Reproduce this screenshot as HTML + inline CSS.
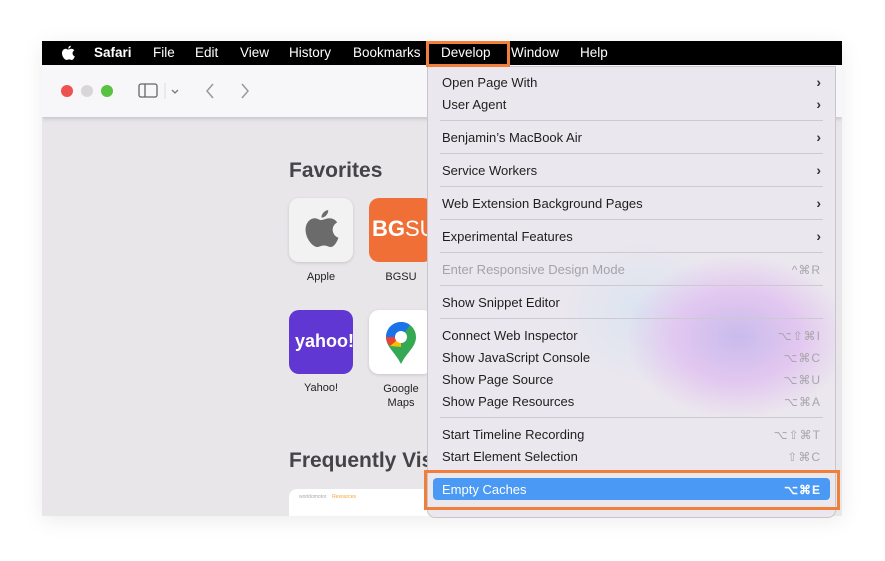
<!DOCTYPE html>
<html><head><meta charset="utf-8"><style>
*{margin:0;padding:0;box-sizing:border-box}
body{width:885px;height:561px;background:#fff;position:relative;overflow:hidden;font-family:"Liberation Sans",sans-serif}
.win{position:absolute;left:42px;top:41px;width:800px;height:475px;background:#e9e6ea;overflow:hidden;box-shadow:0 4px 20px rgba(0,0,0,.08)}
.mb{position:absolute;left:0;top:0;width:800px;height:24px;background:#000;color:#fff;font-size:13.5px}
.mb span{position:absolute;top:4px}
.tb{position:absolute;left:0;top:24px;width:800px;height:52px;background:#f7f6f8;box-shadow:0 2px 4px rgba(0,0,0,.15)}
.dot{position:absolute;top:20px;width:12px;height:12px;border-radius:50%}
.t{position:absolute;font-size:11px;color:#222;text-align:center;width:70px}
.ic{position:absolute;width:64px;height:64px;border-radius:10px}
.menu{position:absolute;left:427px;top:66px;width:409px;height:452px;border-radius:0 0 8px 8px;background:#ebe7ee;border:1px solid #c9c5cc;overflow:hidden}
.it{position:absolute;left:14px;font-size:13px;color:#1e1e1e;white-space:nowrap}
.sc{position:absolute;right:14px;font-size:12px;color:#a9a5ac;letter-spacing:1px}
.ar{position:absolute;right:14px;font-size:14px;color:#333;font-weight:bold}
.sep{position:absolute;left:12px;right:12px;height:1px;background:#cdc9d0}
</style></head><body>
<div class="win">
 <div class="mb">
  <svg style="position:absolute;left:19px;top:4px" width="14" height="16" viewBox="0 0 14 16"><path d="M7 4.5C8 4.5 9 3.8 10.3 3.8c1.2 0 2.3.6 3 1.6-2.6 1.4-2.2 5 .5 6-.5 1.4-1.6 3.6-3 3.6-1 0-1.3-.6-2.6-.6-1.3 0-1.7.6-2.7.6C3.8 15 1 11.8 1 8.3 1 5.6 2.7 3.8 4.6 3.8 5.6 3.8 6.3 4.5 7 4.5z" fill="#fff"/><path d="M7.2 3.6C7.1 2.2 8.3.8 9.8.6c.1 1.5-1.2 3-2.6 3z" fill="#fff"/></svg>
  <span style="left:52px;font-weight:bold">Safari</span>
  <span style="left:111px">File</span>
  <span style="left:153px">Edit</span>
  <span style="left:198px">View</span>
  <span style="left:247px">History</span>
  <span style="left:311px">Bookmarks</span>
  <span style="left:399px">Develop</span>
  <span style="left:469px">Window</span>
  <span style="left:538px">Help</span>
 </div>
 <div class="tb">
  <div class="dot" style="left:19px;background:#ec5250"></div>
  <div class="dot" style="left:39px;background:#d8d6d9"></div>
  <div class="dot" style="left:59px;background:#58c343"></div>
  <svg style="position:absolute;left:96px;top:18px" width="50" height="16"><rect x="1" y="1" width="18" height="13" rx="2" fill="none" stroke="#666" stroke-width="1.3"/><line x1="7" y1="1" x2="7" y2="14" stroke="#666" stroke-width="1.3"/><line x1="27" y1="0" x2="27" y2="16" stroke="#ddd"/><path d="M34 7l3 3 3-3" stroke="#777" fill="none" stroke-width="1.3"/></svg>
  <svg style="position:absolute;left:160px;top:16px" width="50" height="20"><path d="M11 3l-6 7 6 7" stroke="#999" fill="none" stroke-width="1.5"/><path d="M40 3l6 7-6 7" stroke="#999" fill="none" stroke-width="1.5"/></svg>
 </div>
 <div style="position:absolute;left:247px;top:118px;font-size:21px;font-weight:bold;color:#454347">Favorites</div>
 <div class="ic" style="left:247px;top:157px;background:#f3f2f3;box-shadow:0 1px 3px rgba(0,0,0,.15)"><svg style="position:absolute;left:14px;top:10px" width="36" height="42" viewBox="0 0 14 16"><path d="M7 4.5C8 4.5 9 3.8 10.3 3.8c1.2 0 2.3.6 3 1.6-2.6 1.4-2.2 5 .5 6-.5 1.4-1.6 3.6-3 3.6-1 0-1.3-.6-2.6-.6-1.3 0-1.700.6-2.7.6C3.8 15 1 11.8 1 8.3 1 5.6 2.7 3.8 4.6 3.8 5.6 3.8 6.3 4.5 7 4.5z" fill="#6b6b6b"/><path d="M7.2 3.6C7.1 2.2 8.3.8 9.8.6c.1 1.5-1.2 3-2.6 3z" fill="#6b6b6b"/></svg></div>
 <div class="ic" style="left:327px;top:157px;background:#ef6f37;color:#fff;font-weight:bold;font-size:22px;padding:18px 0 0 3px">BG<span style="font-weight:normal">SU</span></div>
 <div class="t" style="left:244px;top:230px">Apple</div>
 <div class="t" style="left:324px;top:230px">BGSU</div>
 <div class="ic" style="left:247px;top:269px;background:#6037d3;color:#fff;font-weight:bold;font-size:18px;padding:21px 0 0 6px">yahoo!</div>
 <div class="ic" style="left:327px;top:269px;background:#fff;box-shadow:0 1px 3px rgba(0,0,0,.15)"><svg width="64" height="64"><path d="M32 54c-6-12-15-17-15-27a15 15 0 0130 0c0 10-9 15-15 27z" fill="#34a853"/><path d="M17 27a15 15 0 0124-12l-9 12z" fill="#1a73e8"/><path d="M17 27l15 0-11 9c-3-3-4-6-4-9z" fill="#ea4335"/><path d="M21 36l11-9v10z" fill="#fbbc04"/><circle cx="32" cy="27" r="6" fill="#fff"/></svg></div>
 <div class="t" style="left:244px;top:341px">Yahoo!</div>
 <div class="t" style="left:324px;top:341px;line-height:14px">Google<br>Maps</div>
 <div style="position:absolute;left:247px;top:408px;font-size:21px;font-weight:bold;color:#454347">Frequently Vis</div>
 <div style="position:absolute;left:247px;top:448px;width:150px;height:40px;background:#fff;border-radius:8px;font-size:5px;color:#aaa;padding:5px 10px">worldomotor <span style="color:#f3a43a">&nbsp;&nbsp;&nbsp;Resources</span></div>
</div>
<div class="menu">
 <div style="position:absolute;left:130px;top:170px;width:170px;height:150px;background:radial-gradient(#d0e2f2,transparent 70%);opacity:.6"></div>
 <div style="position:absolute;left:200px;top:190px;width:220px;height:160px;background:radial-gradient(#c0b0ec,#e0c0f0 40%,transparent 72%);opacity:.8"></div>
 <div class="it" style="top:8px">Open Page With</div><div class="ar" style="top:7px">›</div>
 <div class="it" style="top:30px">User Agent</div><div class="ar" style="top:29px">›</div>
 <div class="sep" style="top:53px"></div>
 <div class="it" style="top:63px">Benjamin’s MacBook Air</div><div class="ar" style="top:62px">›</div>
 <div class="sep" style="top:86px"></div>
 <div class="it" style="top:96px">Service Workers</div><div class="ar" style="top:95px">›</div>
 <div class="sep" style="top:119px"></div>
 <div class="it" style="top:129px">Web Extension Background Pages</div><div class="ar" style="top:128px">›</div>
 <div class="sep" style="top:152px"></div>
 <div class="it" style="top:162px">Experimental Features</div><div class="ar" style="top:161px">›</div>
 <div class="sep" style="top:185px"></div>
 <div class="it" style="top:195px;color:#a6a2a9">Enter Responsive Design Mode</div><div class="sc" style="top:196px">^⌘R</div>
 <div class="sep" style="top:218px"></div>
 <div class="it" style="top:228px">Show Snippet Editor</div>
 <div class="sep" style="top:251px"></div>
 <div class="it" style="top:261px">Connect Web Inspector</div><div class="sc" style="top:262px">⌥⇧⌘I</div>
 <div class="it" style="top:283px">Show JavaScript Console</div><div class="sc" style="top:284px">⌥⌘C</div>
 <div class="it" style="top:305px">Show Page Source</div><div class="sc" style="top:306px">⌥⌘U</div>
 <div class="it" style="top:327px">Show Page Resources</div><div class="sc" style="top:328px">⌥⌘A</div>
 <div class="sep" style="top:350px"></div>
 <div class="it" style="top:360px">Start Timeline Recording</div><div class="sc" style="top:361px">⌥⇧⌘T</div>
 <div class="it" style="top:382px">Start Element Selection</div><div class="sc" style="top:383px">⇧⌘C</div>
 <div class="sep" style="top:405px"></div>
 <div style="position:absolute;left:5px;right:5px;top:411px;height:22px;background:#4a99f4;border-radius:4px"></div>
 <div class="it" style="top:415px;color:#fff">Empty Caches</div><div class="sc" style="top:416px;color:#fff;font-weight:bold">⌥⌘E</div>
</div>
<div style="position:absolute;left:426px;top:41px;width:84px;height:26px;border:3px solid #f07f3b"></div>
<div style="position:absolute;left:424px;top:470px;width:416px;height:40px;border:3px solid #f07f3b"></div>
</body></html>
